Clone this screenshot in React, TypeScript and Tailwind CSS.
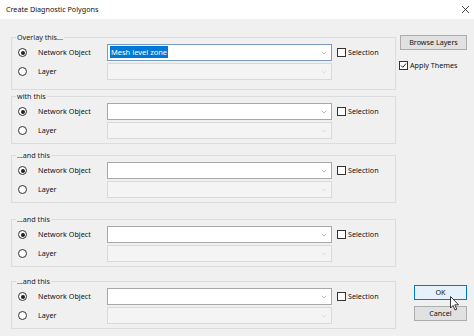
import { ChevronDown } from 'lucide-react'

const FONT = "font-['Noto_Sans',_'Open_Sans',_sans-serif]"

type Group = { label: string; top: number; value?: string; first?: boolean }

const GROUPS: Group[] = [
  { label: 'Overlay this...', top: 0, value: 'Mesh level zone', first: true },
  { label: 'with this', top: 6 },
  { label: '...and this', top: 11 },
  { label: '...and this', top: 16 },
  { label: '...and this', top: 14 },
]

function Radio({ checked }: { checked?: boolean }) {
  return (
    <div className="w-[9px] h-[9px] rounded-full border border-[#333] bg-white flex items-center justify-center shrink-0">
      {checked && <div className="w-[4px] h-[4px] rounded-full bg-[#222]" />}
    </div>
  )
}

function Check({ checked }: { checked?: boolean }) {
  return (
    <div className="w-[9px] h-[9px] border border-[#333] bg-white shrink-0 flex items-center justify-center">
      {checked && (
        <svg width="7" height="7" viewBox="0 0 7 7">
          <path d="M1 3.5 L2.8 5.3 L6 1.5" fill="none" stroke="#222" strokeWidth="1" />
        </svg>
      )}
    </div>
  )
}

function Combo({ value, disabled, focused }: { value?: string; disabled?: boolean; focused?: boolean }) {
  return (
    <div
      className={
        'w-[225px] h-[17px] flex items-center justify-between pl-[2px] pr-[3px] border ' +
        (disabled
          ? 'bg-[#f4f4f4] border-[#d9d9d9]'
          : focused
            ? 'bg-white border-[#7a9cc0]'
            : 'bg-white border-[#a8a8a8]')
      }
    >
      <span className="text-[7.5px]">
        {value && <span className="bg-[#0078d7] text-white px-[1px] py-[1px]">{value}</span>}
      </span>
      <ChevronDown size={8} strokeWidth={1.5} className={disabled ? 'text-[#c8c8c8]' : 'text-[#777]'} />
    </div>
  )
}

function GroupBox({ group }: { group: Group }) {
  return (
    <div
      className={'relative border border-[#dcdcdc] pt-[6px] ' + (group.first ? 'pb-[9px]' : 'pb-[4px]')}
      style={{ marginTop: group.top }}
    >
      <span className="absolute -top-[7px] left-[4px] px-[1px] bg-[#f0f0f0] leading-[12px] text-[#222]">
        {group.label}
      </span>
      <div className="flex flex-col gap-[2px]">
        <div className="flex items-center">
          <div className="ml-[6px]"><Radio checked /></div>
          <span className="ml-[11px] w-[69px]">Network Object</span>
          <Combo value={group.value} focused={group.first} />
          <div className="ml-[5px] flex items-center gap-[2px]">
            <Check />
            <span>Selection</span>
          </div>
        </div>
        <div className="flex items-center">
          <div className="ml-[6px]"><Radio /></div>
          <span className="ml-[11px] w-[69px]">Layer</span>
          <Combo disabled />
        </div>
      </div>
    </div>
  )
}

export default function App() {
  return (
    <div className={`${FONT} w-[474px] h-[336px] bg-[#f0f0f0] text-[7.2px] text-[#111] flex flex-col overflow-hidden relative`}>
      <div className="h-[19px] bg-white flex items-center justify-between pl-[6px] pr-[4px] shrink-0">
        <span className="text-[7.2px] text-[#111]">Create Diagnostic Polygons</span>
        <svg width="9" height="9" viewBox="0 0 9 9">
          <path d="M1 1 L8 8 M8 1 L1 8" stroke="#333" strokeWidth="0.9" />
        </svg>
      </div>

      <div className="flex flex-1 pl-[11px] pt-[18px]">
        <div className="w-[385px] flex flex-col">
          {GROUPS.map((g, i) => (
            <GroupBox key={i} group={g} />
          ))}
        </div>

        <div className="ml-[4px] w-[67px] flex flex-col -mt-[2px] pb-[15px]">
          <div className="h-[15px] bg-[#e1e1e1] border border-[#adadad] flex items-center justify-center">
            Browse Layers
          </div>
          <div className="mt-[10px] flex items-center gap-[2px] -ml-[1px]">
            <Check checked />
            <span>Apply Themes</span>
          </div>
          <div className="mt-auto ml-[14px] flex flex-col gap-[6px]">
            <div className="h-[15px] bg-[#e5f1fb] border border-[#0078d7] flex items-center justify-center">OK</div>
            <div className="h-[15px] bg-[#e1e1e1] border border-[#adadad] flex items-center justify-center">Cancel</div>
          </div>
        </div>
      </div>

      <svg className="absolute left-[450px] top-[296px]" width="10" height="16" viewBox="0 0 10 16">
        <path d="M0.5 0.5 L0.5 12 L3 9.5 L5 14 L6.8 13.2 L4.8 8.8 L8.5 8.8 Z" fill="white" stroke="#222" strokeWidth="0.9" strokeLinejoin="round" />
      </svg>
    </div>
  )
}
